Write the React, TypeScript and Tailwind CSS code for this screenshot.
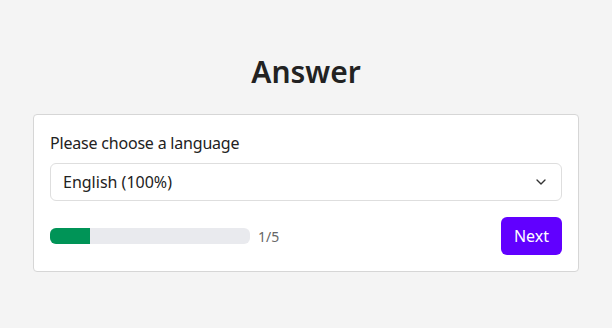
import { ChevronDown } from "lucide-react";

export default function App() {
    const step = 1;
    const total = 5;

    return (
        <div className="min-h-screen w-full bg-[#f4f4f4] px-[33px] pt-[54px] font-['Noto_Sans',sans-serif] text-[#222]">
            <h1 className="text-center text-[30px] font-semibold leading-[36px] text-[#222]">Answer</h1>

            <div className="mt-6 rounded-[4px] border border-[#d6d6d6] bg-white p-4">
                <label className="block text-[16px] leading-6 tracking-[-0.2px] text-[#222]">Please choose a language</label>

                {/* Language select */}
                <div className="mt-2 flex h-[38px] items-center justify-between rounded-[6px] border border-[#dedede] bg-white pl-3 pr-3">
                    <span className="text-[16px] text-[#222]">English (100%)</span>
                    <ChevronDown className="h-4 w-4 text-[#333]" strokeWidth={2} />
                </div>

                {/* Progress + next */}
                <div className="mt-4 flex items-center justify-between">
                    <div className="flex items-center gap-2">
                        <div className="h-4 w-[200px] overflow-hidden rounded-[6px] bg-[#e9eaee]">
                            <div className="h-full bg-[#009457]" style={{ width: `${(step / total) * 100}%` }} />
                        </div>
                        <span className="text-[14px] text-[#666]">{step}/{total}</span>
                    </div>
                    <button className="h-[38px] rounded-[6px] bg-[#6100ff] px-[13px] text-[16px] text-white">Next</button>
                </div>
            </div>
        </div>
    );
}
